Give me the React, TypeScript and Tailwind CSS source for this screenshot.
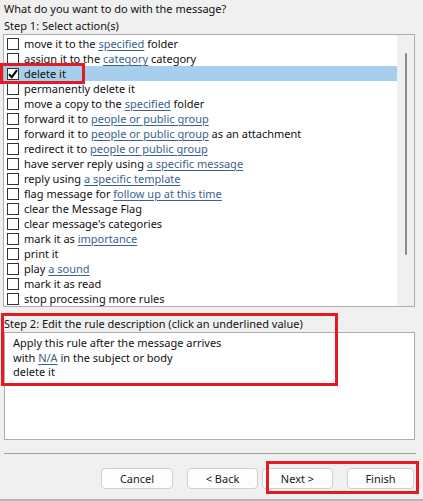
type Seg = { t: string; link?: boolean };

const actions: Seg[][] = [
  [{ t: 'move it to the ' }, { t: 'specified', link: true }, { t: ' folder' }],
  [{ t: 'assign it to the ' }, { t: 'category', link: true }, { t: ' category' }],
  [{ t: 'delete it' }],
  [{ t: 'permanently delete it' }],
  [{ t: 'move a copy to the ' }, { t: 'specified', link: true }, { t: ' folder' }],
  [{ t: 'forward it to ' }, { t: 'people or public group', link: true }],
  [{ t: 'forward it to ' }, { t: 'people or public group', link: true }, { t: ' as an attachment' }],
  [{ t: 'redirect it to ' }, { t: 'people or public group', link: true }],
  [{ t: 'have server reply using ' }, { t: 'a specific message', link: true }],
  [{ t: 'reply using ' }, { t: 'a specific template', link: true }],
  [{ t: 'flag message for ' }, { t: 'follow up at this time', link: true }],
  [{ t: 'clear the Message Flag' }],
  [{ t: "clear message's categories" }],
  [{ t: 'mark it as ' }, { t: 'importance', link: true }],
  [{ t: 'print it' }],
  [{ t: 'play ' }, { t: 'a sound', link: true }],
  [{ t: 'mark it as read' }],
  [{ t: 'stop processing more rules' }],
];

const Link = ({ children }: { children: string }) => (
  <span className="text-[#3a6190] underline decoration-[#3a6190] underline-offset-2">{children}</span>
);

const Row = ({ segs, checked }: { segs: Seg[]; checked: boolean }) => (
  <div className={`flex h-[15px] items-center ${checked ? 'bg-[#a6cfee]' : ''}`}>
    <div className="ml-[3px] flex h-[12px] w-[12px] shrink-0 items-center justify-center border border-[#333] bg-white">
      {checked && (
        <svg width="10" height="10" viewBox="0 0 10 10">
          <path d="M1 5.2 L3.8 8.2 L9 1.2" fill="none" stroke="#000" strokeWidth="2" />
        </svg>
      )}
    </div>
    <span className="ml-[5px] whitespace-nowrap">
      {segs.map((s, i) => (s.link ? <Link key={i}>{s.t}</Link> : <span key={i}>{s.t}</span>))}
    </span>
  </div>
);

const Button = ({ label, w }: { label: string; w: string }) => (
  <button className={`h-[21px] ${w} rounded-[4px] border border-[#d0d0d0] bg-[#fdfdfd] text-[11px] text-[#1a1a1a]`}>
    {label}
  </button>
);

export default function App() {
  return (
    <div
      className="relative h-[501px] w-[423px] overflow-hidden border-b-2 border-[#b5b5b5] bg-[#f0f0f0] text-[11px] leading-[15px] text-[#111]"
      style={{ fontFamily: '"Noto Sans", "Open Sans", sans-serif' }}
    >
      <div className="flex h-[17px] items-center pl-[4px]">What do you want to do with the message?</div>
      <div className="flex h-[17px] items-center pl-[4px]">Step 1: Select action(s)</div>

      <div className="ml-[3px] flex h-[273px] w-[412px] border border-[#adadad] bg-white">
        <div className="flex-1 pt-[1px]">
          {actions.map((a, i) => (
            <Row key={i} segs={a} checked={i === 2} />
          ))}
        </div>
        <div className="flex w-[17px] justify-center bg-[#f0f0f0] pt-[18px]">
          <div className="h-[202px] w-[2px] rounded-full bg-[#8a8a8a]" />
        </div>
      </div>

      <div className="mt-[7px] flex h-[18px] items-center pl-[4px]">Step 2: Edit the rule description (click an underlined value)</div>
      <div className="ml-[4px] h-[108px] w-[411px] border border-[#adadad] bg-white px-[8px] pt-[3px] leading-[14.5px]">
        <div>Apply this rule after the message arrives</div>
        <div>
          with <Link>N/A</Link> in the subject or body
        </div>
        <div>delete it</div>
      </div>

      <div className="ml-[4px] mt-[13px] h-px w-[412px] bg-[#a0a0a0]" />

      <div className="mt-[14px] flex pl-[101px]">
        <Button label="Cancel" w="w-[72px]" />
        <div className="ml-[14px] flex gap-[4px]">
          <Button label="< Back" w="w-[71px]" />
          <Button label="Next >" w="w-[71px]" />
        </div>
        <div className="ml-[14px]">
          <Button label="Finish" w="w-[67px]" />
        </div>
      </div>

      {/* red annotation boxes */}
      <div className="absolute left-[0px] top-[63px] h-[21px] w-[85px] border-[3px] border-[#e31b23]" />
      <div className="absolute left-[1px] top-[313px] h-[73px] w-[337px] border-[3px] border-[#e31b23]" />
      <div className="absolute left-[266px] top-[461px] h-[33px] w-[153px] border-[3px] border-[#e31b23]" />
    </div>
  );
}
